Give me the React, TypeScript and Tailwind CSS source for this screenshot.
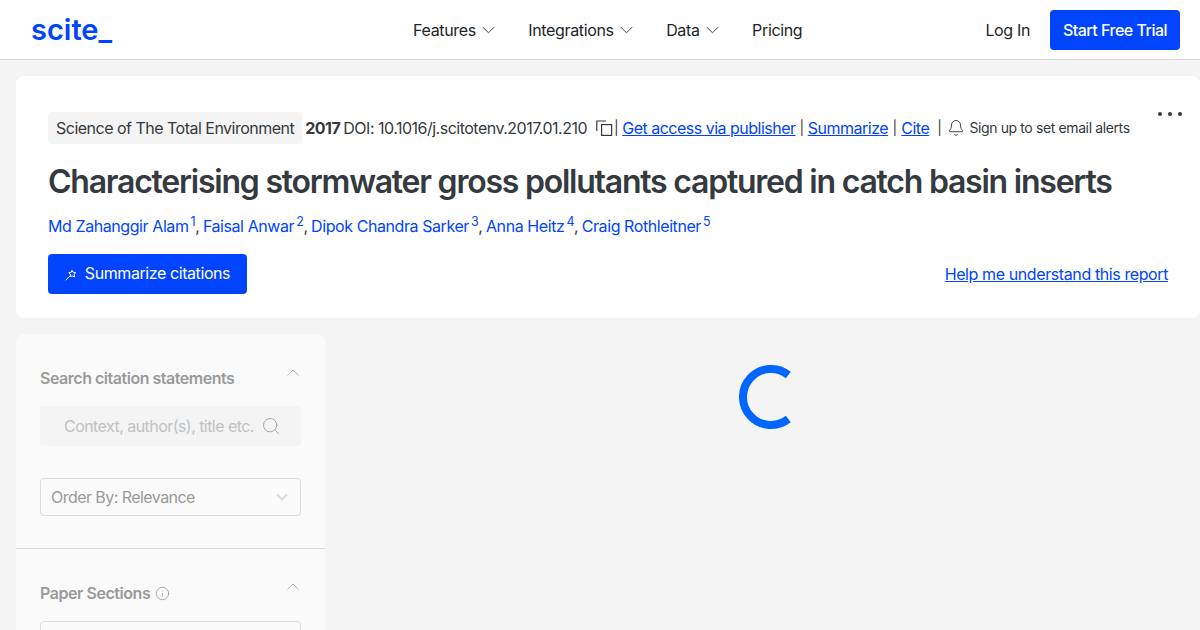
import React from "react";
import { Search, Info, Bell } from "lucide-react";

function NavItem({ label, caret = true }: { label: string; caret?: boolean }) {
  return (
    <div className="flex items-center gap-[6px] text-[16px] leading-6 tracking-[-0.35px] text-[#212529]">
      <span>{label}</span>
      {caret && (
        <svg width="13" height="8" viewBox="0 0 13 8" fill="none" stroke="#495057" strokeWidth="1">
          <path d="M.7 1l5.8 5.8L12.3 1" />
        </svg>
      )}
    </div>
  );
}

function CaretUp() {
  return (
    <svg className="mr-[2px]" width="12" height="7" viewBox="0 0 12 7" fill="none" stroke="#b4b4b4" strokeWidth="1">
      <path d="M.5 6.500L6 1l5.500 5.500" />
    </svg>
  );
}

const linkCls = "text-[#0044ff] underline";

function Sep({ cls = "" }: { cls?: string }) {
  return <span className={`text-[14px] ${cls}`}>|</span>;
}

function Author({ name, n, last }: { name: string; n: number; last?: boolean }) {
  return (
    <span>
      <span className="text-[#0044ff]">{name}</span>
      <sup className="ml-[2px] text-[12.5px] leading-none text-[#0044ff]">{n}</sup>
      {!last && <span className="mr-[3.5px] text-[#343a40]">,</span>}
    </span>
  );
}

export default function App() {
  return (
    <div className="h-[630px] w-[1200px] overflow-hidden bg-[#f4f4f4] font-['Inter',sans-serif] text-[#343a40]">
      <header className="flex h-[60px] items-center justify-between border-b border-[#d8d8d8] bg-white pl-[31px] pr-[20px]">
        <div className="w-[200px] text-[29px] font-semibold leading-none text-[#0044ff]">scite_</div>
        <nav className="mr-[1px] flex items-center gap-[33.5px]">
          <NavItem label="Features" />
          <NavItem label="Integrations" />
          <NavItem label="Data" />
          <NavItem label="Pricing" caret={false} />
        </nav>
        <div className="flex items-center gap-[20px]">
          <span className="text-[16px] tracking-[-0.35px] text-[#212529]">Log In</span>
          <button className="h-[40px] w-[130px] rounded-[4px] bg-[#0044ff] text-[16px] font-medium tracking-[-0.5px] text-white">Start Free Trial</button>
        </div>
      </header>

      <div className="pl-[16px] pt-[16px]">
        <section className="relative h-[242px] rounded-[8px] bg-white px-[32px] pt-[36px]">
          <div className="flex items-center whitespace-nowrap text-[16px] leading-6 tracking-[-0.5px] text-[#343a40]">
            <span className="flex h-[32px] items-center rounded-[4px] bg-[#f4f4f4] px-[8px] tracking-[-0.51px]">Science of The Total Environment</span>
            <strong className="ml-[3px] font-bold">2017</strong>
            <span className="ml-[3px]">DOI: 10.1016/j.scitotenv.2017.01.210</span>
            <svg className="ml-[9px]" width="17" height="16" viewBox="0 0 17 16" fill="none" stroke="#343a40" strokeWidth="1.2">
              <path d="M10 1H.8V11" />
              <rect x="5.600" y="4.600" width="10" height="10.800" />
            </svg>
            <Sep cls="ml-[1px]" />
            <a className={`ml-[4px] ${linkCls}`}>Get access via publisher</a>
            <Sep cls="mx-[4px]" />
            <a className={linkCls}>Summarize</a>
            <Sep cls="mx-[4.5px]" />
            <a className={linkCls}>Cite</a>
            <Sep cls="ml-[8px]" />
            <Bell className="ml-[6px] text-[#343a40]" size={18} strokeWidth={1.3} />
            <span className="ml-[4px] text-[14px] tracking-[-0.38px]">Sign up to set email alerts</span>
          </div>
          <div className="absolute right-[18px] top-[36px] flex gap-[6px]">
            <i className="block h-[4px] w-[4px] rounded-full bg-[#343a40]" />
            <i className="block h-[4px] w-[4px] rounded-full bg-[#343a40]" />
            <i className="block h-[4px] w-[4px] rounded-full bg-[#343a40]" />
          </div>
          <h1 className="mt-[16px] whitespace-nowrap text-[32px] font-semibold leading-[44px] tracking-[-1.23px] text-[#343a40]">
            Characterising stormwater gross pollutants captured in catch basin inserts
          </h1>
          <div className="mt-[10px] whitespace-nowrap text-[16px] leading-6 tracking-[-0.42px]">
            <Author name="Md Zahanggir Alam" n={1} />
            <Author name="Faisal Anwar" n={2} />
            <Author name="Dipok Chandra Sarker" n={3} />
            <Author name="Anna Heitz" n={4} />
            <Author name="Craig Rothleitner" n={5} last />
          </div>
          <div className="mt-[16px] flex items-center justify-between">
            <button className="flex h-[40px] w-[199px] items-center justify-center gap-[8px] rounded-[4px] bg-[#0044ff] pb-[2px] text-[16px] tracking-[-0.42px] text-white">
              <svg className="mt-[4px]" width="12" height="12" viewBox="0 0 12 12" fill="none" stroke="white" strokeWidth="1">
                <path d="M.7 11.300L5.500 6.500" />
                <path d="M7 1.300l1 1.900 2.600.3-1.500 1.800.5 2.500L7.200 7l-2.100.5.300-2.300L3.800 3.700l2.300-.4z" />
              </svg>
              Summarize citations
            </button>
            <a className={`text-[16px] tracking-[-0.4px] ${linkCls}`}>Help me understand this report</a>
          </div>
        </section>

        <div className="mt-[16px] flex">
          <aside className="h-[400px] w-[309px] rounded-[8px] bg-[#fafafa] pt-[32px]">
            <div className="px-[24px]">
              <div className="flex items-start justify-between">
                <span className="text-[16px] font-semibold leading-6 tracking-[-0.48px] text-[#9a9a9a]">Search citation statements</span>
                <span className="mt-[3px]"><CaretUp /></span>
              </div>
              <div className="mt-[16px] flex h-[40px] items-center rounded-[4px] bg-[#f4f4f4] pl-[24px] pr-[20px] text-[16px] tracking-[-0.55px] text-[#c0c2c4]">
                <span className="flex-1 whitespace-nowrap">Context, author(s), title etc.</span>
                <Search size={20} strokeWidth={1.1} className="shrink-0 text-[#a0a0a0]" />
              </div>
              <div className="mt-[32px] flex h-[38px] items-center justify-between rounded-[4px] border border-[#dcdcdc] pl-[10px] pr-[12px] text-[16px] tracking-[-0.55px] text-[#9a9a9a]">
                <span>Order By: Relevance</span>
                <svg width="12" height="8" viewBox="0 0 12 8" fill="none" stroke="#dcdcdc" strokeWidth="2">
                  <path d="M1 1.500l5 5 5-5" />
                </svg>
              </div>
            </div>
            <div className="mt-[32px] border-t border-[#d8d8d8] px-[24px] pt-[32px]">
              <div className="flex items-start justify-between">
                <span className="flex items-center gap-[5px] text-[16px] font-semibold leading-6 tracking-[-0.45px] text-[#9a9a9a]">
                  Paper Sections
                  <Info size={15} strokeWidth={1.1} className="text-[#8a8a8a]" />
                </span>
                <span className="mt-[2px]"><CaretUp /></span>
              </div>
              <div className="mt-[16px] h-[40px] rounded-[4px] border border-[#dcdcdc]" />
            </div>
          </aside>
          <div className="flex flex-1 justify-center pl-[17px] pt-[31px]">
            <svg width="64" height="64" viewBox="0 0 64 64" fill="none">
              <path d="M49.300 10A28 28 0 1 0 49.300 54" stroke="#0066ff" strokeWidth="8" />
            </svg>
          </div>
        </div>
      </div>
    </div>
  );
}
